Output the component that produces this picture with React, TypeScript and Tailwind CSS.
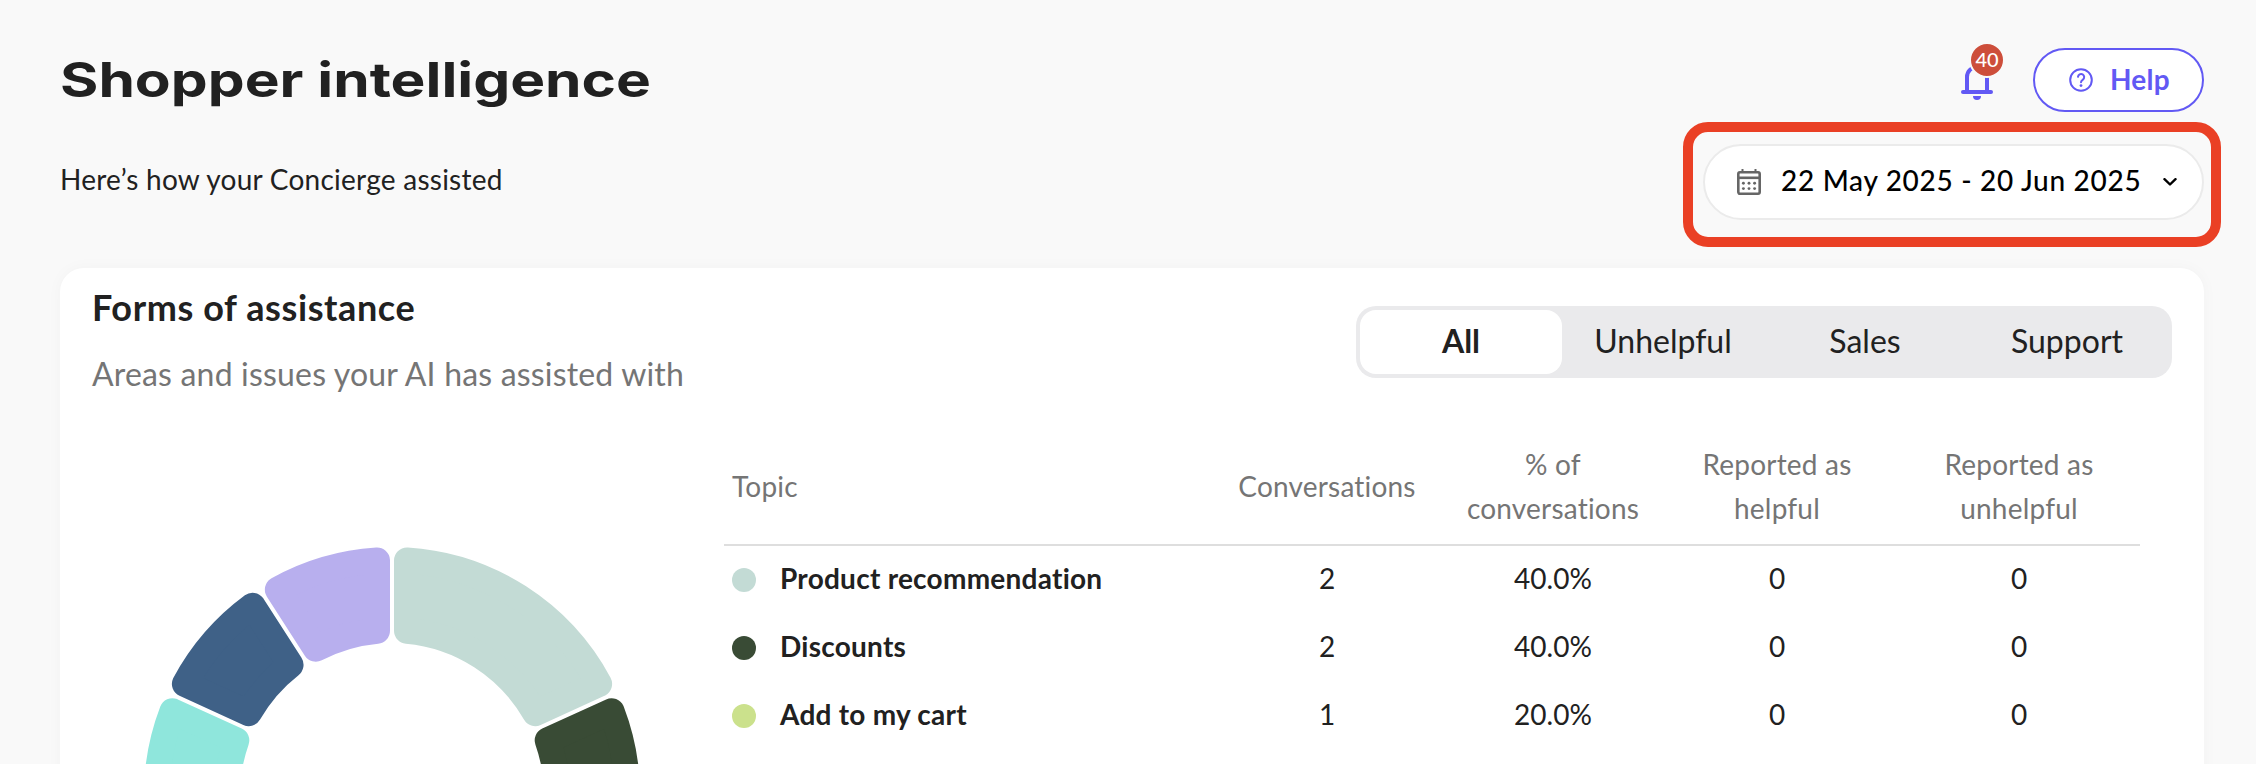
import clsx from 'clsx';

const TABS = ['All', 'Unhelpful', 'Sales', 'Support'];

const TOPICS = [
  { name: 'Product recommendation', color: '#c3dbd5', conversations: 2, share: '40.0%', helpful: 0, unhelpful: 0 },
  { name: 'Discounts', color: '#394b35', conversations: 2, share: '40.0%', helpful: 0, unhelpful: 0 },
  { name: 'Add to my cart', color: '#cbe18c', conversations: 1, share: '20.0%', helpful: 0, unhelpful: 0 },
];

const SLICES = [
  { value: 2, color: '#c3dbd5' },
  { value: 2, color: '#394b35' },
  { value: 1, color: '#cbe18c' },
  { value: 1, color: '#f2c14e' },
  { value: 1, color: '#e58f7b' },
  { value: 2, color: '#8fe6dc' },
  { value: 1, color: '#3f6187' },
  { value: 1, color: '#b8afee' },
];

const OUTER = 248;
const INNER = 152;
const CORNER = 13;
const GAP = 4;

// The slice is drawn inset by CORNER and stroked back out, which rounds its corners.
function slicePath(start: number, end: number) {
  const ro = OUTER - CORNER;
  const ri = INNER + CORNER;
  const inset = GAP / 2 + CORNER;
  const point = (radius: number, angle: number) =>
    `${(radius * Math.sin(angle)).toFixed(2)} ${(-radius * Math.cos(angle)).toFixed(2)}`;
  const ao = Math.asin(inset / ro);
  const ai = Math.asin(inset / ri);
  return [
    `M ${point(ro, start + ao)}`,
    `A ${ro} ${ro} 0 0 1 ${point(ro, end - ao)}`,
    `L ${point(ri, end - ai)}`,
    `A ${ri} ${ri} 0 0 0 ${point(ri, start + ai)}`,
    'Z',
  ].join(' ');
}

function DonutChart() {
  const total = SLICES.reduce((sum, slice) => sum + slice.value, 0);
  let angle = 0;

  return (
    <svg width={500} height={500} viewBox="-250 -250 500 500" className="shrink-0">
      {SLICES.map((slice) => {
        const start = angle;
        angle += (slice.value / total) * Math.PI * 2;
        return (
          <path
            key={slice.color}
            d={slicePath(start, angle)}
            fill={slice.color}
            stroke={slice.color}
            strokeWidth={CORNER * 2}
            strokeLinejoin="round"
          />
        );
      })}
    </svg>
  );
}

function BellIcon() {
  return (
    <svg width={32} height={40} viewBox="0 0 32 40" fill="none" stroke="#6259f4">
      <path d="M6 31V17a10 10 0 0 1 20 0v14" strokeWidth={4} />
      <path d="M2 32h28" strokeWidth={4} strokeLinecap="round" />
      <path d="M12 36h8a4 4 0 0 1-8 0z" fill="#6259f4" stroke="none" />
    </svg>
  );
}

function HelpIcon() {
  return (
    <svg width={24} height={24} viewBox="0 0 24 24" fill="none" stroke="#6259f4" strokeWidth={2}>
      <circle cx={12} cy={12} r={10.8} />
      <path d="M9 8.8a3.1 3.1 0 1 1 4.9 2.8c-1.3.9-1.9 1.4-1.9 2.7" strokeLinecap="round" />
      <circle cx={12} cy={17.6} r={1.4} fill="#6259f4" stroke="none" />
    </svg>
  );
}

function CalendarIcon() {
  return (
    <svg width={24} height={26} viewBox="0 0 24 26" fill="none" stroke="#666" strokeWidth={2.6}>
      <rect x={1.3} y={3.3} width={21.4} height={21.4} rx={1.6} />
      <path d="M1 8.8h22" />
      <path d="M5.5 0v4M18.5 0v4" strokeWidth={2} />
      <g fill="#666" stroke="none">
        {[6.4, 12, 17.6].map((cx) => (
          <g key={cx}>
            <circle cx={cx} cy={14.2} r={1.45} />
            <circle cx={cx} cy={19.6} r={1.45} />
          </g>
        ))}
      </g>
    </svg>
  );
}

function Header() {
  return (
    <header className="pl-[60px] pr-[52px] pt-12">
      <div className="flex h-16 items-center justify-between">
        <h1 className="origin-left scale-x-[1.221] whitespace-nowrap pb-px font-['Inter',sans-serif] text-[48px] font-bold leading-none text-[#212121]">
          Shopper intelligence
        </h1>
        <div className="flex items-center gap-10">
          <div className="relative h-10 w-8">
            <BellIcon />
            <span className="absolute -top-[18px] left-2 flex h-9 w-9 items-center justify-center rounded-full border-2 border-[#f9f9f9] bg-[#cd4e3b] pb-0.5 text-[20px] font-medium leading-none text-white">
              40
            </span>
          </div>
          <button className="flex h-16 w-[171px] items-center rounded-full border-2 border-[#6259f4] bg-white pl-[34px] text-[28px] font-bold text-[#6259f4]">
            <HelpIcon />
            <span className="ml-[17px] pb-[3px] tracking-[0.2px]">Help</span>
          </button>
        </div>
      </div>

      <div className="mt-8 flex h-[76px] items-center justify-between">
        <p className="pb-1.5 text-[28px] tracking-[0.25px] text-[#212121]">Here’s how your Concierge assisted</p>
        <div className="relative">
          <button className="flex h-[76px] w-[501px] items-center rounded-full border-2 border-[#ebebeb] bg-white pl-8 text-[28px] font-medium text-black">
            <CalendarIcon />
            <span className="ml-5 w-[362px] whitespace-nowrap pb-[5px] text-left tracking-[0.7px]">22 May 2025 - 20 Jun 2025</span>
            <svg width={14} height={8} viewBox="0 0 14 8" fill="none" stroke="#000" strokeWidth={2.4} className="ml-5">
              <path d="M1.5 1.2 7 6.5l5.5-5.3" strokeLinecap="round" strokeLinejoin="round" />
            </svg>
          </button>
          <div className="pointer-events-none absolute -bottom-[27px] -left-5 -right-[17px] -top-[22px] rounded-[25px] border-[10px] border-[#ea4025]" />
        </div>
      </div>
    </header>
  );
}

function Tabs() {
  return (
    <div className="mt-[38px] grid h-[72px] w-[816px] grid-cols-4 rounded-[20px] bg-[#eaeaec] p-1 text-[32px] text-[#212121]">
      {TABS.map((tab, index) => (
        <button
          key={tab}
          className={clsx('flex items-center justify-center rounded-2xl pb-[3px]', index === 0 && 'bg-white font-bold')}
        >
          {tab}
        </button>
      ))}
    </div>
  );
}

function TopicTable() {
  return (
    <div className="w-[1416px] text-[28px] text-[#212121]">
      <div className="grid grid-cols-[480px_246px_206px_242px_242px] items-center border-b-2 border-[#dedede] pb-3.5 text-center leading-[44px] tracking-[0.2px] text-[#757575]">
        <div className="pl-2 text-left">Topic</div>
        <div>Conversations</div>
        <div>% of<br />conversations</div>
        <div>Reported as<br />helpful</div>
        <div>Reported as<br />unhelpful</div>
      </div>
      {TOPICS.map((topic) => (
        <div key={topic.name} className="grid h-[68px] grid-cols-[480px_246px_206px_242px_242px] items-center text-center">
          <div className="flex items-center gap-6 pl-2">
            <span className="h-6 w-6 rounded-full" style={{ backgroundColor: topic.color }} />
            <span className="pb-[5px] font-bold tracking-[0.25px]">{topic.name}</span>
          </div>
          <div className="pb-[5px]">{topic.conversations}</div>
          <div className="pb-[5px]">{topic.share}</div>
          <div className="pb-[5px]">{topic.helpful}</div>
          <div className="pb-[5px]">{topic.unhelpful}</div>
        </div>
      ))}
    </div>
  );
}

export default function App() {
  return (
    <div className="h-[764px] w-[2256px] overflow-hidden bg-[#f9f9f9] font-['Lato','Open_Sans',sans-serif]">
      <Header />

      <main className="ml-[60px] mr-[52px] mt-12 h-[900px] rounded-3xl bg-white px-8 shadow-[0_0_16px_rgba(0,0,0,0.03)]">
        <div className="flex h-[174px] justify-between">
          <div className="pt-[17px]">
            <h2 className="text-[36px] font-bold leading-[44px] tracking-[0.6px] text-[#212121]">Forms of assistance</h2>
            <p className="mt-[23px] text-[32px] leading-[44px] tracking-[0.18px] text-[#757575]">Areas and issues your AI has assisted with</p>
          </div>
          <Tabs />
        </div>

        <div className="flex items-start">
          <div className="flex w-[632px] pl-[50px] pt-[103px]">
            <DonutChart />
          </div>
          <TopicTable />
        </div>
      </main>
    </div>
  );
}
